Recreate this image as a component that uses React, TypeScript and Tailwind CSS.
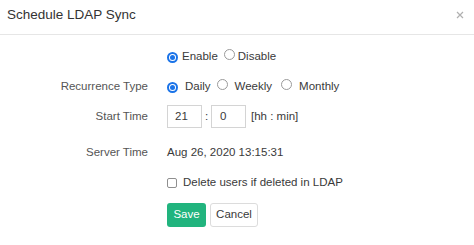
import React from "react";

function Radio({ checked }: { checked?: boolean }) {
  return checked ? (
    <span className="inline-flex w-[11px] h-[11px] rounded-full bg-[#1a73e8] items-center justify-center shrink-0">
      <span className="w-[7px] h-[7px] rounded-full bg-white flex items-center justify-center">
        <span className="w-[5px] h-[5px] rounded-full bg-[#1a73e8]" />
      </span>
    </span>
  ) : (
    <span className="inline-block w-[11px] h-[11px] rounded-full border border-[#9a9a9a] bg-white shrink-0" />
  );
}

export default function App() {
  const font = { fontFamily: '"Liberation Sans", Arial, sans-serif' };
  return (
    <div className="w-[474px] h-[245px] bg-white text-[#3a3a3a] text-[11.5px] overflow-hidden" style={font}>
      <div className="h-[35px] border-b border-[#e6e6e6] flex items-start justify-between pl-[7px] pr-[10px] pt-[6px]">
        <div className="text-[13.5px] leading-[17px] text-[#333]">Schedule LDAP Sync</div>
        <svg width="8" height="8" viewBox="0 0 8 8" className="mt-[5px]">
          <path d="M1 1L7 7M7 1L1 7" stroke="#b0b0b0" strokeWidth="1.2" />
        </svg>
      </div>

      <div className="grid grid-cols-[148px_1fr] gap-x-[19px] items-center">
        <div className="mt-[12px] h-[20px]" />
        <div className="mt-[12px] h-[20px] flex items-center">
          <Radio checked />
          <span className="ml-[4px]">Enable</span>
          <span className="ml-[6px]"><Radio /></span>
          <span className="ml-[3px]">Disable</span>
        </div>

        <div className="mt-[10px] h-[20px] flex items-center justify-end text-[#555]">Recurrence Type</div>
        <div className="mt-[10px] h-[20px] flex items-center">
          <Radio checked />
          <span className="ml-[7px]">Daily</span>
          <span className="ml-[6px]"><Radio /></span>
          <span className="ml-[7px]">Weekly</span>
          <span className="ml-[9px]"><Radio /></span>
          <span className="ml-[7px]">Monthly</span>
        </div>

        <div className="mt-[8px] h-[23px] flex items-center justify-end text-[#555]">Start Time</div>
        <div className="mt-[8px] h-[23px] flex items-center">
          <div className="w-[35px] h-[23px] border border-[#d4d4d4] flex items-center pl-[7px]">21</div>
          <span className="w-[9px] text-center">:</span>
          <div className="w-[35px] h-[23px] border border-[#d4d4d4] flex items-center pl-[8px]">0</div>
          <span className="ml-[5px]">[hh : min]</span>
        </div>

        <div className="mt-[15px] h-[20px] flex items-center justify-end text-[#555]">Server Time</div>
        <div className="mt-[15px] h-[20px] flex items-center">Aug 26, 2020 13:15:31</div>

        <div className="mt-[10px] h-[20px]" />
        <div className="mt-[10px] h-[20px] flex items-center">
          <span className="w-[10px] h-[10px] border border-[#8f8f8f] rounded-[2px] bg-white" />
          <span className="ml-[6px]">Delete users if deleted in LDAP</span>
        </div>

        <div className="mt-[10px] h-[24px]" />
        <div className="mt-[10px] h-[24px] flex items-center gap-[4px]">
          <div className="w-[39px] h-[24px] rounded-[3px] bg-[#21b47e] text-white flex items-center justify-center">Save</div>
          <div className="w-[48px] h-[24px] rounded-[3px] border border-[#dcdcdc] bg-white flex items-center justify-center">Cancel</div>
        </div>
      </div>
    </div>
  );
}
